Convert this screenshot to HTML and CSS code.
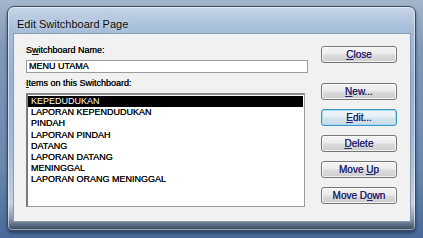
FILE: index.html
```html
<!DOCTYPE html>
<html>
<head>
<meta charset="utf-8">
<link rel="stylesheet" href="styles.css">
</head>
<body>
<div class="desktop">
  <div class="window">
    <div class="titlebar">Edit Switchboard Page</div>
    <div class="client">
      <div class="leftcol">
        <div class="label">S<u>w</u>itchboard Name:</div>
        <div class="textbox">MENU UTAMA</div>
        <div class="label label2"><u>I</u>tems on this Switchboard:</div>
        <div class="listbox">
          <div class="row selected">KEPEDUDUKAN</div>
          <div class="row">LAPORAN KEPENDUDUKAN</div>
          <div class="row">PINDAH</div>
          <div class="row">LAPORAN PINDAH</div>
          <div class="row">DATANG</div>
          <div class="row">LAPORAN DATANG</div>
          <div class="row">MENINGGAL</div>
          <div class="row">LAPORAN ORANG MENINGGAL</div>
        </div>
      </div>
      <div class="buttons">
        <div class="btn btn-close"><u>C</u>lose</div>
        <div class="btn btn-first"><u>N</u>ew...</div>
        <div class="btn btn-default"><u>E</u>dit...</div>
        <div class="btn"><u>D</u>elete</div>
        <div class="btn">Move <u>U</u>p</div>
        <div class="btn">Move D<u>o</u>wn</div>
      </div>
    </div>
  </div>
</div>
</body>
</html>
```

FILE: styles.css
```css
html, body {
  margin: 0;
  padding: 0;
}

body {
  font-family: "Liberation Sans", Arial, sans-serif;
}

.desktop {
  width: 423px;
  height: 238px;
  overflow: hidden;
  box-sizing: border-box;
  padding: 6px 7px 0 7px;
  background: linear-gradient(180deg, #a3b5ca 0%, #8199b8 20%, #6a87ad 70%, #48699a 100%);
}

.window {
  width: 409px;
  height: 225px;
  box-sizing: border-box;
  border: 1px solid #3a4a60;
  border-radius: 7px 7px 5px 5px;
  padding: 0 5px 9px 6px;
  background: linear-gradient(180deg, #c6d5e6 0%, #a6bdd9 10%, #94afd3 35%, #a9bfdb 70%, #c5d2e0 88%, #8a99ad 95%, #34455c 100%);
  box-shadow: inset 0 0 0 1px rgba(255, 255, 255, 0.5), 0 2px 3px rgba(20, 35, 60, 0.6);
}

.titlebar {
  height: 27px;
  box-sizing: border-box;
  padding: 11px 0 0 3px;
  font-size: 11px;
  line-height: 12px;
  color: #0c0c0c;
  text-shadow: 0 0 6px rgba(255, 255, 255, 0.7);
}

.client {
  height: 187px;
  box-sizing: border-box;
  background: #f1f1f1;
  box-shadow: 0 0 0 1px #8a9bb1;
  display: flex;
  padding: 11px 13px 0 12px;
  gap: 13px;
}

.leftcol {
  width: 282px;
  display: flex;
  flex-direction: column;
}

.label {
  font-size: 9px;
  line-height: 11px;
  color: #111;
  text-shadow: 0 0 0.4px #000;
}

.label2 {
  margin-top: 5px;
}

.textbox {
  margin-top: 4px;
  height: 13px;
  box-sizing: border-box;
  border: 1px solid #9c9c9c;
  background: #fff;
  font-size: 9px;
  line-height: 11px;
  padding-left: 2px;
  color: #111;
  text-shadow: 0 0 0.4px #000;
}

.listbox {
  margin-top: 4px;
  width: 279px;
  height: 114px;
  box-sizing: border-box;
  border: 1px solid #9a9a9a;
  border-left: 2px solid #7c7c7c;
  border-top: 2px solid #8a8a8a;
  background: #fff;
  padding: 1px 1px 0 0;
}

.row {
  height: 11.2px;
  font-size: 9px;
  line-height: 11px;
  padding-left: 3px;
  color: #111;
  white-space: nowrap;
  text-shadow: 0 0 0.4px #000;
}

.row.selected {
  background: #000;
  color: #fff;
  text-shadow: none;
}

.buttons {
  width: 76px;
  display: flex;
  flex-direction: column;
  padding-top: 1px;
}

.btn {
  height: 17px;
  box-sizing: border-box;
  margin-bottom: 9px;
  border: 1px solid #767676;
  border-radius: 3px;
  background: linear-gradient(180deg, #f4f4f4 0%, #ebebeb 48%, #dcdcdc 52%, #cdcdcd 100%);
  box-shadow: inset 0 0 0 1px rgba(255, 255, 255, 0.7);
  font-size: 10px;
  line-height: 15px;
  text-align: center;
  color: #27276f;
  text-shadow: 0 0 0.4px #27276f;
}

.btn-close {
  margin-bottom: 20px;
}

.btn-default {
  border-color: #3d95c4;
  background: linear-gradient(180deg, #eef5fa 0%, #e5eff6 48%, #d6e4ee 52%, #cbdbe7 100%);
  box-shadow: inset 0 0 0 1px #a8dcf3;
}
```
